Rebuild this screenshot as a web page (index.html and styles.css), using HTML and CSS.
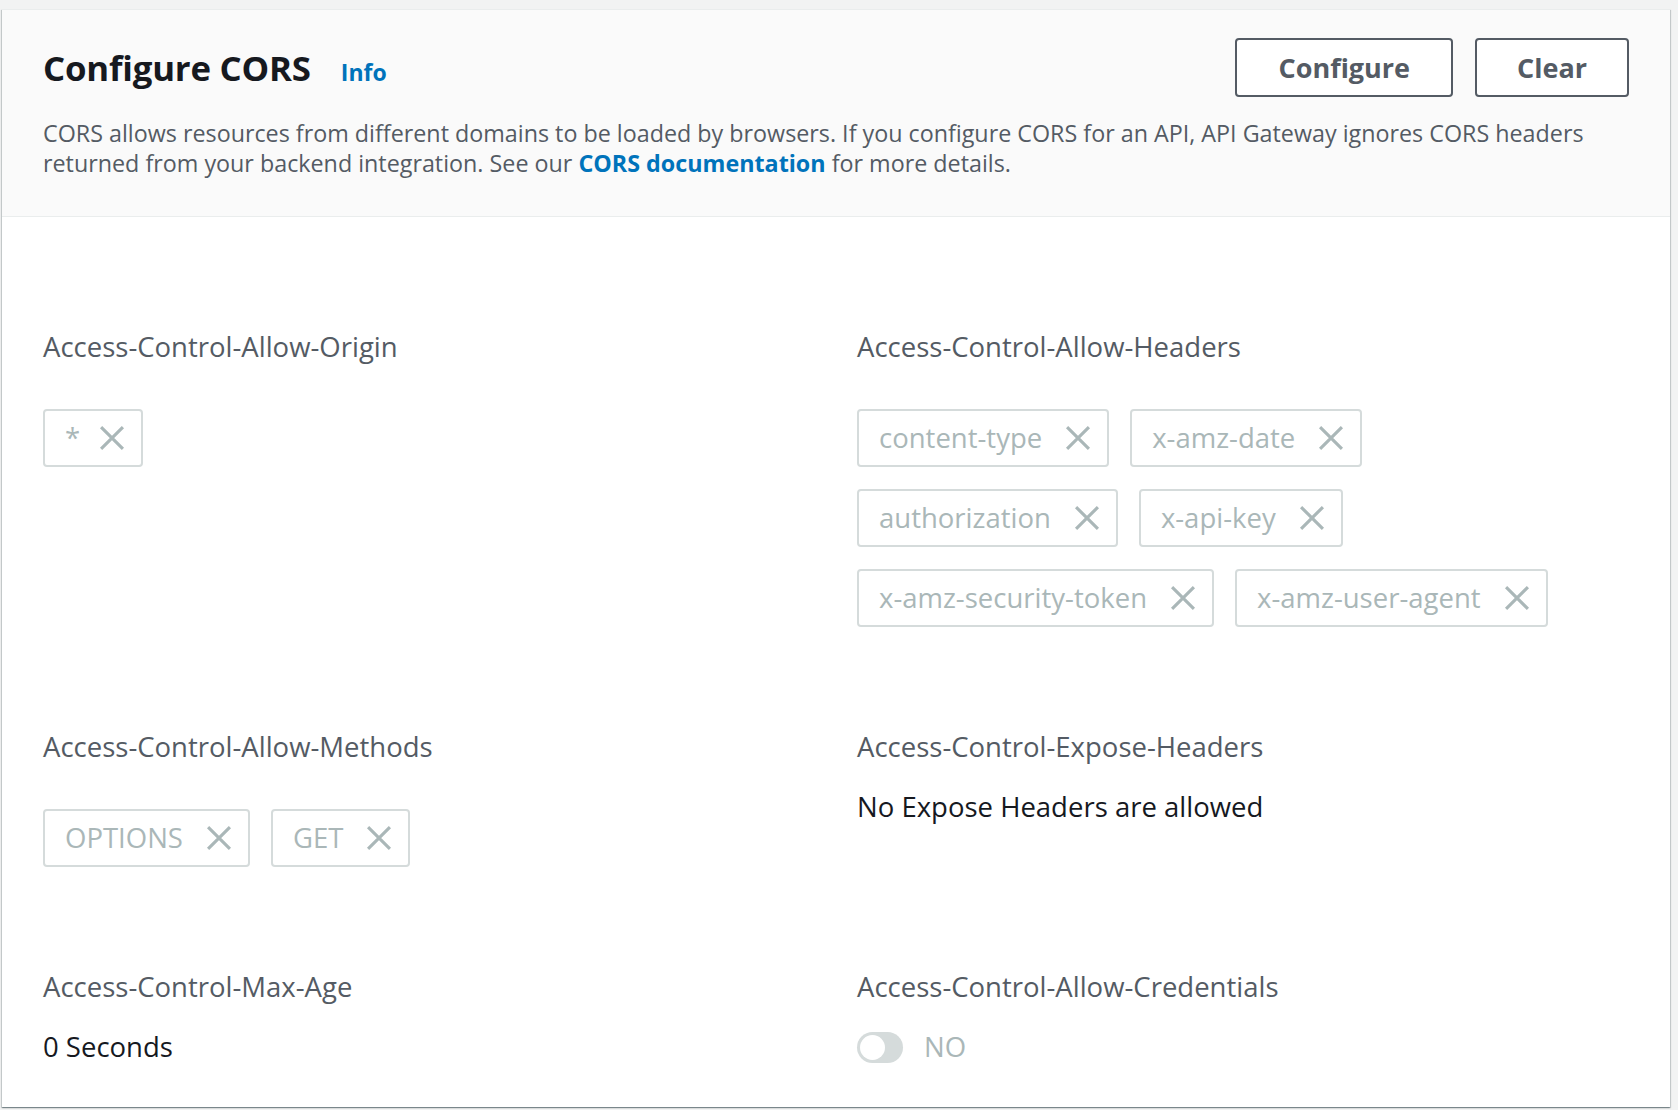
FILE: index.html
```html
<!DOCTYPE html>
<html lang="en">
<head>
<meta charset="utf-8">
<title>Configure CORS</title>
<link rel="stylesheet" href="styles.css">
</head>
<body>
<div class="card">
  <div class="card-header">
    <div class="header-row">
      <div class="title-group">
        <h2 class="title">Configure CORS</h2>
        <a class="info-link" href="#">Info</a>
      </div>
      <div class="actions">
        <button class="btn">Configure</button>
        <button class="btn">Clear</button>
      </div>
    </div>
    <p class="description">CORS allows resources from different domains to be loaded by browsers. If you configure CORS for an API, API Gateway ignores CORS headers returned from your backend integration. See our <a class="doc-link" href="#">CORS documentation</a> for more details.</p>
  </div>
  <div class="card-body">
    <div class="field">
      <div class="field-label">Access-Control-Allow-Origin</div>
      <div class="tags">
        <div class="tag-row">
          <span class="tag tag-narrow"><span class="tag-text">*</span><svg class="tag-x" viewBox="0 0 25 25"><path d="M2 2L23 23M23 2L2 23"/></svg></span>
        </div>
      </div>
    </div>
    <div class="field">
      <div class="field-label">Access-Control-Allow-Headers</div>
      <div class="tags">
        <div class="tag-row">
          <span class="tag"><span class="tag-text">content-type</span><svg class="tag-x" viewBox="0 0 25 25"><path d="M2 2L23 23M23 2L2 23"/></svg></span>
          <span class="tag"><span class="tag-text">x-amz-date</span><svg class="tag-x" viewBox="0 0 25 25"><path d="M2 2L23 23M23 2L2 23"/></svg></span>
        </div>
        <div class="tag-row">
          <span class="tag"><span class="tag-text">authorization</span><svg class="tag-x" viewBox="0 0 25 25"><path d="M2 2L23 23M23 2L2 23"/></svg></span>
          <span class="tag"><span class="tag-text">x-api-key</span><svg class="tag-x" viewBox="0 0 25 25"><path d="M2 2L23 23M23 2L2 23"/></svg></span>
        </div>
        <div class="tag-row">
          <span class="tag"><span class="tag-text">x-amz-security-token</span><svg class="tag-x" viewBox="0 0 25 25"><path d="M2 2L23 23M23 2L2 23"/></svg></span>
          <span class="tag"><span class="tag-text">x-amz-user-agent</span><svg class="tag-x" viewBox="0 0 25 25"><path d="M2 2L23 23M23 2L2 23"/></svg></span>
        </div>
      </div>
    </div>
    <div class="field">
      <div class="field-label">Access-Control-Allow-Methods</div>
      <div class="tags">
        <div class="tag-row">
          <span class="tag"><span class="tag-text">OPTIONS</span><svg class="tag-x" viewBox="0 0 25 25"><path d="M2 2L23 23M23 2L2 23"/></svg></span>
          <span class="tag"><span class="tag-text">GET</span><svg class="tag-x" viewBox="0 0 25 25"><path d="M2 2L23 23M23 2L2 23"/></svg></span>
        </div>
      </div>
    </div>
    <div class="field">
      <div class="field-label">Access-Control-Expose-Headers</div>
      <div class="field-value">No Expose Headers are allowed</div>
    </div>
    <div class="field">
      <div class="field-label">Access-Control-Max-Age</div>
      <div class="field-value">0 Seconds</div>
    </div>
    <div class="field">
      <div class="field-label">Access-Control-Allow-Credentials</div>
      <div class="toggle-row">
        <span class="toggle"><span class="knob"></span></span>
        <span class="toggle-label">NO</span>
      </div>
    </div>
  </div>
</div>
</body>
</html>
```

FILE: styles.css
```css
html, body {
  margin: 0;
  padding: 0;
}
body {
  background: #f2f3f3;
  font-family: "Open Sans", "Noto Sans", "Liberation Sans", sans-serif;
  padding: 9px 8px 2px 2px;
  min-height: 1110px;
  box-sizing: border-box;
}
.card {
  background: #ffffff;
  border-top: 1px solid #eaeded;
  box-shadow: 0 1px 1px 0 rgba(0, 28, 36, 0.3), 1px 1px 1px 0 rgba(0, 28, 36, 0.15), -1px 1px 1px 0 rgba(0, 28, 36, 0.15);
  height: 1098px;
  box-sizing: border-box;
}
.card-header {
  background: #fafafa;
  border-bottom: 1px solid #eaeded;
  padding: 28px 41px 38px 41px;
}
.header-row {
  display: flex;
  justify-content: space-between;
  align-items: center;
}
.title-group {
  display: flex;
  align-items: baseline;
  gap: 30px;
}
.title {
  margin: 0;
  font-size: 34.8px;
  line-height: 44px;
  font-weight: 700;
  color: #16191f;
  letter-spacing: -0.2px;
}
.info-link {
  font-size: 23px;
  font-weight: 700;
  color: #0073bb;
  text-decoration: none;
}
.actions {
  display: flex;
  gap: 22px;
}
.btn {
  height: 59px;
  padding: 0 40px;
  border: 2px solid #545b64;
  border-radius: 4px;
  background: #ffffff;
  color: #545b64;
  font-family: "Open Sans", "Noto Sans", sans-serif;
  font-size: 27px;
  font-weight: 700;
}
.btn:first-child {
  padding: 0 41px;
}
.description {
  margin: 21px 0 0;
  font-size: 23.3px;
  line-height: 30px;
  color: #545b64;
}
.doc-link {
  color: #0073bb;
  font-weight: 700;
  text-decoration: none;
}
.card-body {
  display: grid;
  grid-template-columns: 1fr 1fr;
  column-gap: 42px;
  row-gap: 102px;
  padding: 112px 41px 0 41px;
}
.field {
  display: flex;
  flex-direction: column;
  align-items: flex-start;
}
.field-label {
  font-size: 27.5px;
  line-height: 36px;
  color: #545b64;
}
.field-value {
  margin-top: 24px;
  font-size: 27.5px;
  line-height: 36px;
  color: #16191f;
}
.tags {
  margin-top: 44px;
  display: flex;
  flex-direction: column;
  gap: 22px;
}
.tag-row {
  display: flex;
  gap: 21px;
}
.tag {
  display: inline-flex;
  align-items: center;
  gap: 23px;
  height: 58px;
  box-sizing: border-box;
  padding: 0 16px 0 20px;
  border: 2px solid #d5dbdb;
  border-radius: 4px;
  color: #aab7b8;
  font-size: 27.5px;
  line-height: 36px;
}
.tag-narrow {
  gap: 19px;
}
.tag-x {
  width: 26px;
  height: 26px;
  flex: none;
}
.tag-x path {
  stroke: #aab7b8;
  stroke-width: 3;
  fill: none;
}
.toggle-row {
  margin-top: 24px;
  display: flex;
  align-items: center;
  gap: 21px;
}
.toggle {
  width: 46px;
  height: 31px;
  border-radius: 16px;
  background: #d5dbdb;
  display: flex;
  align-items: center;
  padding: 0 3px;
  box-sizing: border-box;
}
.knob {
  width: 25px;
  height: 25px;
  border-radius: 50%;
  background: #ffffff;
}
.toggle-label {
  font-size: 27.5px;
  line-height: 36px;
  color: #aab7b8;
}
```
